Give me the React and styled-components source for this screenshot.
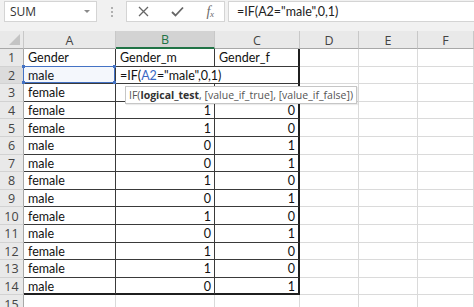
import React from "react";
import styled, { createGlobalStyle } from "styled-components";

const Global = createGlobalStyle`
  html, body { margin: 0; padding: 0; background: #ffffff; }
  body { width: 474px; height: 307px; overflow: hidden; }
  #root { width: 474px; height: 307px; }
`;

const Page = styled.div`
  width: 474px;
  height: 307px;
  display: flex;
  flex-direction: column;
  background: #f1f1f1;
  overflow: hidden;
`;

const Toolbar = styled.div`
  height: 31px;
  flex: none;
  display: flex;
  align-items: flex-start;
  padding: 1px 0 0 4px;
  box-sizing: border-box;
  background: #f1f1f1;
`;

const NameBox = styled.div`
  width: 93px;
  height: 21px;
  box-sizing: border-box;
  background: #fff;
  border: 1px solid #d4d4d4;
  display: flex;
  align-items: center;
  justify-content: space-between;
  padding: 0 6px 0 5px;
  font-family: "Open Sans", "Noto Sans", sans-serif;
  font-size: 12px;
  color: #333;
`;

const Caret = styled.span`
  width: 0;
  height: 0;
  border-left: 3px solid transparent;
  border-right: 3px solid transparent;
  border-top: 3px solid #8a8a8a;
`;

const Grip = styled.div`
  width: 29px;
  height: 21px;
  display: flex;
  flex-direction: column;
  align-items: center;
  justify-content: center;
  gap: 2px;
  & > i {
    width: 2px;
    height: 2px;
    background: #b0b0b0;
    display: block;
  }
`;

const IconBox = styled.div`
  width: 99px;
  height: 21px;
  box-sizing: border-box;
  background: #fff;
  border: 1px solid #d4d4d4;
  display: grid;
  grid-template-columns: 33px 34px 32px;
  align-items: center;
  justify-items: center;
`;

const Fx = styled.span`
  font-family: "Liberation Serif", "DejaVu Serif", serif;
  font-style: italic;
  font-size: 14px;
  color: #6b6b6b;
  letter-spacing: -0.5px;
  & > sub {
    font-size: 9px;
    vertical-align: -1px;
  }
`;

const FormulaBox = styled.div`
  flex: 1;
  margin-left: 3px;
  height: 21px;
  box-sizing: border-box;
  background: #fff;
  border: 1px solid #d4d4d4;
  border-right: none;
  display: flex;
  align-items: center;
  padding-left: 8px;
  font-family: "Lato", "Liberation Sans", sans-serif;
  font-size: 12.5px;
  color: #222;
`;

const Sheet = styled.div`
  position: relative;
  flex: 1;
  display: grid;
  grid-template-columns: 24px 92px 99px 85px 59px 59px 1fr;
  grid-template-rows: 18px repeat(15, 17.6px);
  background: #fff;
`;

const ColHead = styled.div`
  box-sizing: border-box;
  background: ${(p) => (p.$active ? "#d3d3d3" : "#e9e9e9")};
  border-right: 1px solid #c8c8c8;
  border-bottom: ${(p) => (p.$active ? "2px solid #217346" : "1px solid #a8a8a8")};
  display: flex;
  align-items: center;
  justify-content: center;
  font-family: "Open Sans", "Noto Sans", sans-serif;
  font-size: 12.5px;
  color: ${(p) => (p.$active ? "#217346" : "#444")};
  padding-top: 1px;
`;

const Corner = styled.div`
  position: relative;
  box-sizing: border-box;
  background: #e9e9e9;
  border-right: 1px solid #c8c8c8;
  border-bottom: 1px solid #a8a8a8;
  &::after {
    content: "";
    position: absolute;
    right: 3px;
    bottom: 3px;
    width: 0;
    height: 0;
    border-left: 11px solid transparent;
    border-bottom: 11px solid #c4c4c4;
  }
`;

const RowHead = styled.div`
  box-sizing: border-box;
  background: ${(p) => (p.$active ? "#dcdcdc" : "#e9e9e9")};
  border-right: 1px solid #a8a8a8;
  border-bottom: 1px solid #d2d2d2;
  display: flex;
  align-items: center;
  justify-content: center;
  font-family: "Open Sans", "Noto Sans", sans-serif;
  font-size: 12.5px;
  color: #444;
  padding-top: 1px;
`;

const Cell = styled.div`
  position: relative;
  box-sizing: border-box;
  background: #fff;
  border-right: ${(p) =>
    p.$noRight ? "none" : p.$thickRight ? "2px solid #1f1f1f" : p.$table ? "1px solid #3a3a3a" : "1px solid #dadada"};
  border-bottom: ${(p) =>
    p.$thickBottom ? "2px solid #1f1f1f" : p.$table ? "1px solid #3a3a3a" : "1px solid #dadada"};
  display: flex;
  align-items: center;
  justify-content: ${(p) => (p.$num ? "flex-end" : "flex-start")};
  padding: 1px 3px 0 4px;
  font-family: "Lato", "Liberation Sans", sans-serif;
  font-size: 12.5px;
  color: #111;
  white-space: nowrap;
  overflow: visible;
  z-index: ${(p) => (p.$over ? 2 : 0)};
`;

const RefBox = styled.div`
  position: absolute;
  inset: -1px 0 0 -1px;
  border: 1px solid #4472c4;
  background: rgba(68, 114, 196, 0.06);
  pointer-events: none;
  & > b {
    position: absolute;
    width: 3px;
    height: 3px;
    background: #4472c4;
  }
`;

const RefText = styled.span`
  color: #3a68c4;
`;

const Tooltip = styled.div`
  position: absolute;
  left: 125px;
  top: 55px;
  height: 18px;
  box-sizing: border-box;
  padding: 0 3px 0 3px;
  background: #fff;
  border: 1px solid #c6c6c6;
  box-shadow: 1px 1px 1px rgba(0, 0, 0, 0.08);
  display: flex;
  align-items: center;
  font-family: "Open Sans", "Noto Sans", sans-serif;
  font-size: 10.5px;
  color: #555;
  white-space: nowrap;
  z-index: 5;
  & > b {
    font-weight: 700;
    color: #333;
  }
`;

/* row 3 values in B and C sit under the tooltip, so they are left blank */
const data = [
  ["Gender", "Gender_m", "Gender_f"],
  ["male", null, ""],
  ["female", "", ""],
  ["female", "1", "0"],
  ["female", "1", "0"],
  ["male", "0", "1"],
  ["male", "0", "1"],
  ["female", "1", "0"],
  ["male", "0", "1"],
  ["female", "1", "0"],
  ["male", "0", "1"],
  ["female", "1", "0"],
  ["female", "1", "0"],
  ["male", "0", "1"],
];

const cols = ["A", "B", "C", "D", "E", "F"];

const Formula = () => (
  <>
    =IF(<RefText>A2</RefText>="male",0,1)
  </>
);

export default function App() {
  const cells = [];
  cells.push(<Corner key="corner" />);
  cols.forEach((c) => cells.push(<ColHead key={"h" + c} $active={c === "B"}>{c}</ColHead>));

  for (let r = 1; r <= 15; r++) {
    const row = data[r - 1];
    cells.push(
      <RowHead key={"r" + r} $active={r === 2}>
        {r}
      </RowHead>
    );
    for (let c = 0; c < 6; c++) {
      const inTable = row && c < 3;
      const key = `c${r}-${c}`;
      if (!inTable) {
        cells.push(<Cell key={key} />);
        continue;
      }
      const isNum = r > 1 && c > 0;
      const last = r === 14;
      if (r === 2 && c === 1) {
        cells.push(
          <Cell key={key} $table $noRight $over>
            <Formula />
          </Cell>
        );
        continue;
      }
      if (r === 2 && c === 0) {
        cells.push(
          <Cell key={key} $table>
            <RefBox>
              <b style={{ left: -2, top: -2 }} />
              <b style={{ right: -2, top: -2 }} />
              <b style={{ left: -2, bottom: -2 }} />
              <b style={{ right: -2, bottom: -2 }} />
            </RefBox>
            {row[c]}
          </Cell>
        );
        continue;
      }
      cells.push(
        <Cell key={key} $table $num={isNum} $thickRight={c === 2} $thickBottom={last}>
          {row[c]}
        </Cell>
      );
    }
  }

  return (
    <Page>
      <Global />
      <Toolbar>
        <NameBox>
          SUM
          <Caret />
        </NameBox>
        <Grip>
          <i />
          <i />
          <i />
        </Grip>
        <IconBox>
          <svg width="11" height="11" viewBox="0 0 11 11">
            <path d="M1 1 L10 10 M10 1 L1 10" stroke="#666" strokeWidth="1.3" fill="none" />
          </svg>
          <svg width="13" height="11" viewBox="0 0 13 11">
            <path d="M1 6 L4.5 9.5 L12 1.5" stroke="#666" strokeWidth="1.8" fill="none" />
          </svg>
          <Fx>
            f<sub>x</sub>
          </Fx>
        </IconBox>
        <FormulaBox>=IF(A2="male",0,1)</FormulaBox>
      </Toolbar>
      <Sheet>
        {cells}
        <Tooltip>
          IF(<b>logical_test</b>, [value_if_true], [value_if_false])
        </Tooltip>
      </Sheet>
    </Page>
  );
}
